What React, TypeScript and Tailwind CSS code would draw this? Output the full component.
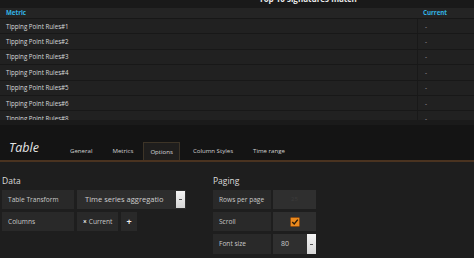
const rows = ["#1", "#2", "#3", "#4", "#5", "#6", "#8"];
const tabs = ["General", "Metrics", "Options", "Column Styles", "Time range"];

export default function App() {
  return (
    <div
      className="w-[474px] h-[258px] overflow-hidden bg-[#1e1e1e] text-[#d8d9da]"
      style={{ fontFamily: '"Open Sans", "Liberation Sans", sans-serif' }}
    >
      {/* panel table */}
      <div className="h-[125px] bg-[#1a1a1a] flex flex-col">
        <div className="h-[8px] overflow-hidden pl-[259px] bg-[#191919]">
          <div className="-mt-[6px] text-[8px] leading-[10px] font-bold text-[#e8e8e8]">
            Top 10 signatures match
          </div>
        </div>
        <div className="h-[112px] overflow-hidden flex flex-col bg-[#212121]">
          <div className="h-[11px] shrink-0 flex items-center text-[6.2px] font-bold text-[#33b5e5] bg-[#242424] border-b border-[#171717]">
            <div className="w-[417px] pl-[6px]">Metric</div>
            <div className="pl-[6px]">Current</div>
          </div>
          {rows.map((r) => (
            <div
              key={r}
              className="h-[15.4px] shrink-0 flex items-center text-[6.2px] border-b border-[#181818]"
            >
              <div className="w-[417px] h-full flex items-center pl-[6px]">Tipping Point Rules{r}</div>
              <div className="h-full flex items-center pl-[7px] border-l border-[#191919] text-[#9a9a9a]">-</div>
            </div>
          ))}
        </div>
      </div>

      {/* editor header */}
      <div className="h-[37px] bg-[#141414] flex items-end pl-[9px] border-b-2 border-[#4a3320]">
        <div className="italic text-[12.5px] leading-[16px] mb-[4px] w-[51px] text-[#e4e4e4]">Table</div>
        <div className="flex">
          {tabs.map((t) => (
            <div
              key={t}
              className={
                t === "Options"
                  ? "h-[18px] px-[6px] mr-[3px] flex items-center text-[6.1px] text-[#d8d9da] bg-[#1f1e1d] border border-b-0 border-[#3d3427]"
                  : "h-[18px] px-[10px] flex items-center text-[6.1px] text-[#d0d0d0]"
              }
            >
              {t}
            </div>
          ))}
        </div>
      </div>

      {/* editor body */}
      <div className="flex pt-[13px] pl-[2px]">
        <div className="w-[211px]">
          <div className="text-[8.5px] leading-[12px] mb-[3px] text-[#dcdcdc]">Data</div>
          <div className="flex flex-col gap-[3px]">
            <div className="flex gap-[3px] h-[19px]">
              <div className="w-[72px] bg-[#292929] flex items-center pl-[6px] text-[6.6px] text-[#c8c8c8]">
                Table Transform
              </div>
              <div className="w-[109px] bg-[#2d2d2d] flex items-center justify-between">
                <span className="pl-[8px] text-[7.5px] text-[#cdcdcd]">Time series aggregatio</span>
                <span className="w-[9px] h-[17px] mr-[1px] bg-gradient-to-b from-[#f4f4f4] to-[#d6d6d6] flex items-center justify-center">
                  <span className="w-[3px] h-[1px] bg-[#555]" />
                </span>
              </div>
            </div>
            <div className="flex gap-[3px] h-[19px]">
              <div className="w-[72px] bg-[#292929] flex items-center pl-[6px] text-[6.6px] text-[#c8c8c8]">
                Columns
              </div>
              <div className="w-[41px] bg-[#292929] flex items-center pl-[6px] text-[6.6px] text-[#c8c8c8]">
                <span className="font-bold text-[#eee] mr-[2px]">×</span>Current
              </div>
              <div className="w-[16px] bg-[#292929] flex items-center justify-center text-[9px] font-bold text-[#eee]">
                +
              </div>
            </div>
          </div>
        </div>

        <div>
          <div className="text-[8.5px] leading-[12px] mb-[3px] text-[#dcdcdc]">Paging</div>
          <div className="flex flex-col gap-[3px]">
            <div className="flex gap-[2px] h-[19px]">
              <div className="w-[58px] bg-[#292929] flex items-center pl-[6px] text-[6.6px] text-[#c8c8c8]">
                Rows per page
              </div>
              <div className="w-[43px] bg-[#2f2f2f] flex items-center justify-center text-[6px] text-[#3c3c3c]">
                25
              </div>
            </div>
            <div className="flex gap-[2px] h-[19px]">
              <div className="w-[58px] bg-[#292929] flex items-center pl-[6px] text-[6.6px] text-[#c8c8c8]">
                Scroll
              </div>
              <div className="w-[43px] bg-[#2f2f2f] flex items-center justify-center">
                <svg width="10" height="10" viewBox="0 0 10 10">
                  <rect x="0.5" y="0.5" width="9" height="9" rx="1" fill="#eb8a1e" stroke="#8a4a10" />
                  <path d="M2.3 5 L4.2 7 L7.8 2.6" fill="none" stroke="#2a1a08" strokeWidth="1.4" />
                </svg>
              </div>
            </div>
            <div className="flex gap-[2px] h-[20px]">
              <div className="w-[58px] bg-[#292929] flex items-center pl-[6px] text-[6.6px] text-[#c8c8c8]">
                Font size
              </div>
              <div className="w-[43px] bg-[#2f2f2f] flex items-center justify-between">
                <span className="pl-[8px] text-[7px] text-[#cdcdcd]">80</span>
                <span className="w-[9px] h-[20px] bg-gradient-to-b from-[#f4f4f4] to-[#d6d6d6] flex items-center justify-center">
                  <span className="w-[3px] h-[1px] bg-[#555]" />
                </span>
              </div>
            </div>
          </div>
        </div>
      </div>
    </div>
  );
}
